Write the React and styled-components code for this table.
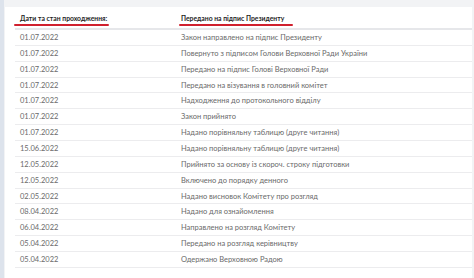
import React from 'react';
import styled, { createGlobalStyle } from 'styled-components';

const GlobalStyle = createGlobalStyle`
  html, body {
    margin: 0;
    padding: 0;
    background: #f2f3f5;
  }
  body {
    font-family: Lato, "Noto Sans", sans-serif;
    -webkit-font-smoothing: antialiased;
  }
`;

const Page = styled.div`
  display: flex;
  width: 474px;
  height: 278px;
  overflow: hidden;
`;

const SideStrip = styled.div`
  width: 4px;
  flex-shrink: 0;
  background: #dde3ec;
`;

const Card = styled.div`
  flex: 1;
  margin: 7px 2px 0 1px;
  padding: 1px 0 0 10px;
  background: #ffffff;
`;

const Table = styled.div`
  display: grid;
  grid-template-columns: 161px 1fr;
`;

const HeadCell = styled.div`
  height: 20px;
  display: flex;
  align-items: center;
  padding-left: 5px;
  border-bottom: 2px solid #e6e7ea;
  font-size: 6.8px;
  font-weight: 700;
  color: #1e1e1e;
`;

const HeadLabel = styled.span`
  position: relative;

  &::after {
    content: '';
    position: absolute;
    left: ${p => p.$left}px;
    right: ${p => p.$right}px;
    bottom: -4px;
    height: 2px;
    background: #d0202e;
    border-radius: 1px;
  }
`;

const Cell = styled.div`
  height: 14.86px;
  display: flex;
  align-items: center;
  padding-left: 5px;
  border-bottom: 1px solid #ececee;
  font-size: 7.5px;
  color: #6a6a6a;
  white-space: nowrap;
`;

const rows = [
  ['01.07.2022', 'Закон направлено на підпис Президенту'],
  ['01.07.2022', 'Повернуто з підписом Голови Верховної Ради України'],
  ['01.07.2022', 'Передано на підпис Голові Верховної Ради'],
  ['01.07.2022', 'Передано на візування в головний комітет'],
  ['01.07.2022', 'Надходження до протокольного відділу'],
  ['01.07.2022', 'Закон прийнято'],
  ['01.07.2022', 'Надано порівняльну таблицю (друге читання)'],
  ['15.06.2022', 'Надано порівняльну таблицю (друге читання)'],
  ['12.05.2022', 'Прийнято за основу із скороч. строку підготовки'],
  ['12.05.2022', 'Включено до порядку денного'],
  ['02.05.2022', 'Надано висновок Комітету про розгляд'],
  ['08.04.2022', 'Надано для ознайомлення'],
  ['06.04.2022', 'Направлено на розгляд Комітету'],
  ['05.04.2022', 'Передано на розгляд керівництву'],
  ['05.04.2022', 'Одержано Верховною Радою'],
];

export default function App() {
  return (
    <>
      <GlobalStyle />
      <Page>
        <SideStrip />
        <Card>
          <Table>
            <HeadCell>
              <HeadLabel $left={-6} $right={-2}>Дати та стан проходження:</HeadLabel>
            </HeadCell>
            <HeadCell>
              <HeadLabel $left={-2} $right={-9}>Передано на підпис Президенту</HeadLabel>
            </HeadCell>
            {rows.map(([date, text], i) => (
              <React.Fragment key={i}>
                <Cell>{date}</Cell>
                <Cell>{text}</Cell>
              </React.Fragment>
            ))}
          </Table>
        </Card>
      </Page>
    </>
  );
}
